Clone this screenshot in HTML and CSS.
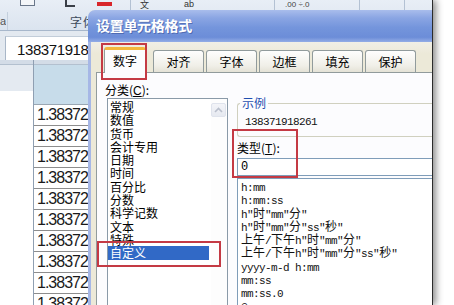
FILE: index.html
```html
<!DOCTYPE html>
<html lang="zh-CN">
<head>
<meta charset="utf-8">
<title>设置单元格格式</title>
<link rel="stylesheet" href="styles.css">
</head>
<body>
<div class="frame">
  <div class="app">
    <div class="ribbon">
      <div class="ribbon-icons">
        <span class="ri-box"></span>
        <span class="ri-dark"></span>
        <span class="ri-red"></span>
        <span class="ri-sep"></span>
        <span class="ri-txt ri-wen">文</span>
        <span class="ri-txt ri-ab">ab</span>
        <span class="ri-sep s2"></span>
        <span class="ri-txt ri-dec">.00 ÷.0</span>
        <span class="ri-sep s3"></span>
        <span class="ri-sep s4"></span>
      </div>
      <div class="ribbon-labels">
        <span class="rl-icon">a</span>
        <span class="rl-sep"></span>
        <span class="rl-text">字体</span>
      </div>
    </div>
    <div class="fbar"><div class="fbox">1383719182</div></div>
    <div class="sheet">
      <div class="rowhdr"><div class="band"></div><div class="rh-top"></div></div>
      <div class="colb">
        <div class="band"></div>
        <div class="cb-top"></div>
        <div class="cell">1.38372</div>
        <div class="cell">1.38372</div>
        <div class="cell">1.38372</div>
        <div class="cell">1.38372</div>
        <div class="cell">1.38372</div>
        <div class="cell">1.38372</div>
        <div class="cell">1.38372</div>
        <div class="cell">1.38372</div>
        <div class="cell">1.38372</div>
        <div class="cell">1.38372</div>
      </div>
    </div>
  </div>

  <div class="dialog">
    <div class="titlebar">设置单元格格式</div>
    <div class="dbody">
      <div class="tabs">
        <div class="tab sel">数字</div>
        <div class="tab">对齐</div>
        <div class="tab">字体</div>
        <div class="tab">边框</div>
        <div class="tab">填充</div>
        <div class="tab">保护</div>
      </div>
      <div class="panel">
        <div class="left">
          <div class="lbl">分类(<u>C</u>):</div>
          <div class="cat-list">
            <div class="cat-items">
              <div>常规</div>
              <div>数值</div>
              <div>货币</div>
              <div>会计专用</div>
              <div>日期</div>
              <div>时间</div>
              <div>百分比</div>
              <div>分数</div>
              <div>科学记数</div>
              <div>文本</div>
              <div>特殊</div>
              <div class="sel">自定义</div>
            </div>
            <div class="vscroll">
              <div class="sbtn">
                <svg width="9" height="6" viewBox="0 0 9 6"><path d="M1 5 L4.5 1.5 L8 5" fill="none" stroke="#b9bfcc" stroke-width="1.6"/></svg>
              </div>
            </div>
          </div>
        </div>
        <div class="right">
          <fieldset class="sample">
            <legend>示例</legend>
            <div class="sample-val">138371918261</div>
          </fieldset>
          <div class="lbl type-lbl">类型(<u>T</u>):</div>
          <div class="type-input">0</div>
          <div class="fmt-list">
            <div>h:mm</div>
            <div>h:mm:ss</div>
            <div>h"<span class="w">时</span>"mm"<span class="w">分</span>"</div>
            <div>h"<span class="w">时</span>"mm"<span class="w">分</span>"ss"<span class="w">秒</span>"</div>
            <div><span class="w">上午</span>/<span class="w">下午</span>h"<span class="w">时</span>"mm"<span class="w">分</span>"</div>
            <div><span class="w">上午</span>/<span class="w">下午</span>h"<span class="w">时</span>"mm"<span class="w">分</span>"ss"<span class="w">秒</span>"</div>
            <div>yyyy-m-d h:mm</div>
            <div>mm:ss</div>
            <div>mm:ss.0</div>
            <div>@</div>
          </div>
        </div>
      </div>
    </div>
  </div>

  <div class="hl hl-tab"></div>
  <div class="hl hl-type"></div>
  <div class="hl hl-cat"></div>
</div>
</body>
</html>
```

FILE: styles.css
```css
* { box-sizing: border-box; margin: 0; padding: 0; }
html, body { width: 454px; height: 305px; overflow: hidden; background: #ffffff; }
body { font-family: "Noto Sans CJK SC", "Liberation Sans", sans-serif; color: #000; }

.frame {
  position: relative;
  width: 433px;
  height: 305px;
  overflow: hidden;
  border-right: 1px solid #2b2b2b;
  box-shadow: 3px 0 7px rgba(0, 0, 0, 0.45);
  background: #fff;
}

/* ---------- Excel background ---------- */
.app { width: 432px; height: 305px; display: flex; flex-direction: column; }

.ribbon {
  height: 33px;
  background: linear-gradient(#e8eef6, #dbe4ef);
  border-bottom: 1px solid #a7b7cb;
  display: flex;
  flex-direction: column;
}
.ribbon-icons { height: 12px; display: flex; align-items: flex-start; padding-left: 20px; overflow: hidden; }
.ri-box { width: 15px; height: 6px; border: 1px solid #6a778a; border-top: none; background: #f4f6f9; }
.ri-dark { margin-left: 30px; width: 10px; height: 7px; border-left: 2px solid #3a3f48; border-bottom: 2px solid #3a3f48; }
.ri-red { margin-left: 22px; margin-top: 2px; width: 15px; height: 4px; background: #d8262b; }
.ri-sep { margin-left: 18px; width: 1px; height: 12px; background: #b3c1d3; }
.ri-txt { font-size: 9px; line-height: 9px; color: #333; white-space: nowrap; }
.ri-wen { margin-left: 9px; }
.ri-ab { margin-left: 35px; font-family: "Liberation Sans", sans-serif; }
.ri-sep.s2 { margin-left: 80px; }
.ri-dec { margin-left: 10px; font-family: "Liberation Sans", sans-serif; font-size: 8px; color: #444; }
.ri-sep.s3 { margin-left: 50px; }
.ri-sep.s4 { margin-left: 44px; }

.ribbon-labels { flex: 1; display: flex; align-items: center; }
.rl-icon { width: 6px; font: 11px "Liberation Sans", sans-serif; color: #555; overflow: hidden; }
.rl-sep { width: 1px; height: 18px; background: #c3cfdd; margin-left: 1px; }
.rl-text { margin-left: 62px; font-size: 12px; color: #3d4a5c; letter-spacing: 1px; }

.fbar { height: 29px; background: #e3e9f0; padding: 5px 0 0 5px; }
.fbox {
  height: 24px;
  background: #fff;
  border-left: 1px solid #a9b7c8;
  border-top: 1px solid #c2cdd9;
  padding: 2px 0 0 11px;
  font: 15px/22px "Liberation Sans", sans-serif;
  letter-spacing: -0.4px;
  color: #111;
}

.sheet { flex: 1; display: flex; background: #fff; }
.band { height: 5px; background: #d3dce7; border-bottom: 1px solid #b3c0cf; }
.rowhdr { width: 34px; border-right: 1px solid #8f9fb2; display: flex; flex-direction: column; }
.rh-top { height: 26px; background: #e4eaf1; }
.colb { width: 60px; display: flex; flex-direction: column; }
.cb-top { height: 40px; background: #c7dcea; border-bottom: 1px solid #9aa7b3; }
.cell {
  height: 21px;
  flex: none;
  border-bottom: 1px solid #8d8d8d;
  padding-left: 3px;
  font: 16px/20px "Liberation Sans", sans-serif;
  letter-spacing: -1px;
  color: #1a1a1a;
  white-space: nowrap;
}

/* ---------- Dialog ---------- */
.dialog {
  position: absolute;
  left: 88px;
  top: 10px;
  width: 380px;
  height: 300px;
  display: flex;
  flex-direction: column;
  border-radius: 7px 7px 0 0;
  overflow: hidden;
  background: #ece9d8;
}
.titlebar {
  height: 32px;
  flex: none;
  padding-left: 8px;
  background: linear-gradient(#a9bdec 0%, #8aa5e3 25%, #7495dc 55%, #6c8dd8 85%, #93ace6 100%);
  color: #fff;
  font-size: 14px;
  font-weight: 700;
  line-height: 30px;
  letter-spacing: -0.3px;
  text-shadow: 1px 1px 0 rgba(40, 60, 130, 0.45);
}
.dbody {
  flex: 1;
  display: flex;
  flex-direction: column;
  border-left: 3px solid #a6b7e6;
  padding-top: 5px;
  background: linear-gradient(#f1efe6, #ece9d8 12px);
}
.tabs { height: 25px; display: flex; align-items: flex-end; gap: 2px; padding-left: 13px; position: relative; z-index: 2; }
.tab {
  width: 51px;
  height: 22px;
  border: 1px solid #919b9c;
  border-bottom: none;
  border-radius: 3px 3px 0 0;
  background: linear-gradient(#fefefe, #f0efe8 70%, #e4e2d6);
  font-size: 12px;
  line-height: 21px;
  text-align: center;
}
.tab.sel {
  width: 42px;
  height: 26px;
  margin-right: 5px;
  margin-bottom: -1px;
  background: #fcfcfe;
  border-top: 3px solid #f4b73c;
  line-height: 21px;
}
.panel {
  flex: 1;
  margin-left: 5px;
  background: #fcfcfe;
  border: 1px solid #919b9c;
  display: flex;
  padding: 10px 0 0 8px;
}
.lbl { font-size: 12px; line-height: 14px; height: 14px; white-space: nowrap; }
.lbl u { text-decoration: underline; font-family: "Liberation Sans", sans-serif; }
.left { width: 123px; flex: none; display: flex; flex-direction: column; gap: 1px; }
.cat-list {
  margin-left: 2px;
  flex: 1;
  border: 1px solid #8a9aa8;
  border-bottom: none;
  background: #fff;
  display: flex;
}
.cat-items { flex: 1; padding-top: 1px; }
.cat-items div {
  height: 13.3px;
  line-height: 13.3px;
  padding-left: 2px;
  margin-right: 2px;
  font-size: 12px;
  white-space: nowrap;
}
.cat-items div.sel { background: #3169c6; color: #fff; }
.vscroll { width: 16px; flex: none; background: #fdfdfd; padding-top: 4px; }
.sbtn {
  width: 15px;
  height: 14px;
  background: linear-gradient(#f3f4f8, #e6e9f0);
  border: 1px solid #dfe3ec;
  border-radius: 2px;
  display: flex;
  align-items: center;
  justify-content: center;
}

.right { flex: 1; margin-left: 9px; padding-top: 13px; display: flex; flex-direction: column; }
.sample {
  border: 1px solid #d0d0bf;
  border-radius: 3px;
  border-right: none;
  padding: 0 0 6px 7px;
  height: 41px;
}
.sample legend {
  margin-left: -5px;
  padding: 0 2px;
  font-size: 12px;
  line-height: 14px;
  color: #1f4fb0;
}
.sample-val { margin-top: 6px; font: 11px/12px "Liberation Mono", monospace; letter-spacing: -0.6px; color: #111; }
.type-lbl { margin-top: 4px; }
.type-input {
  margin-top: 3px;
  height: 18px;
  border: 1px solid #7f9db9;
  border-right: none;
  background: #fff;
  padding-left: 3px;
  font: 12px/16px "Liberation Mono", monospace;
}
.fmt-list {
  margin-top: 2px;
  flex: 1;
  border: 1px solid #7f9db9;
  border-right: none;
  border-bottom: none;
  background: #fff;
  padding: 3px 0 0 3px;
  font: 11px "Liberation Mono", monospace;
  letter-spacing: -0.6px;
  color: #111;
}
.fmt-list div { height: 13.3px; line-height: 13.3px; white-space: nowrap; overflow: visible; }
.fmt-list .w { font: 12px/8px "Noto Sans CJK SC", sans-serif; letter-spacing: 0; }

/* ---------- red highlight marks ---------- */
.hl { position: absolute; border: 2.5px solid #c43a44; z-index: 5; }
.hl-tab { left: 101px; top: 43px; width: 46px; height: 37px; }
.hl-type { left: 232px; top: 129px; width: 66px; height: 49px; }
.hl-cat { left: 97px; top: 241px; width: 124px; height: 26px; }
```
